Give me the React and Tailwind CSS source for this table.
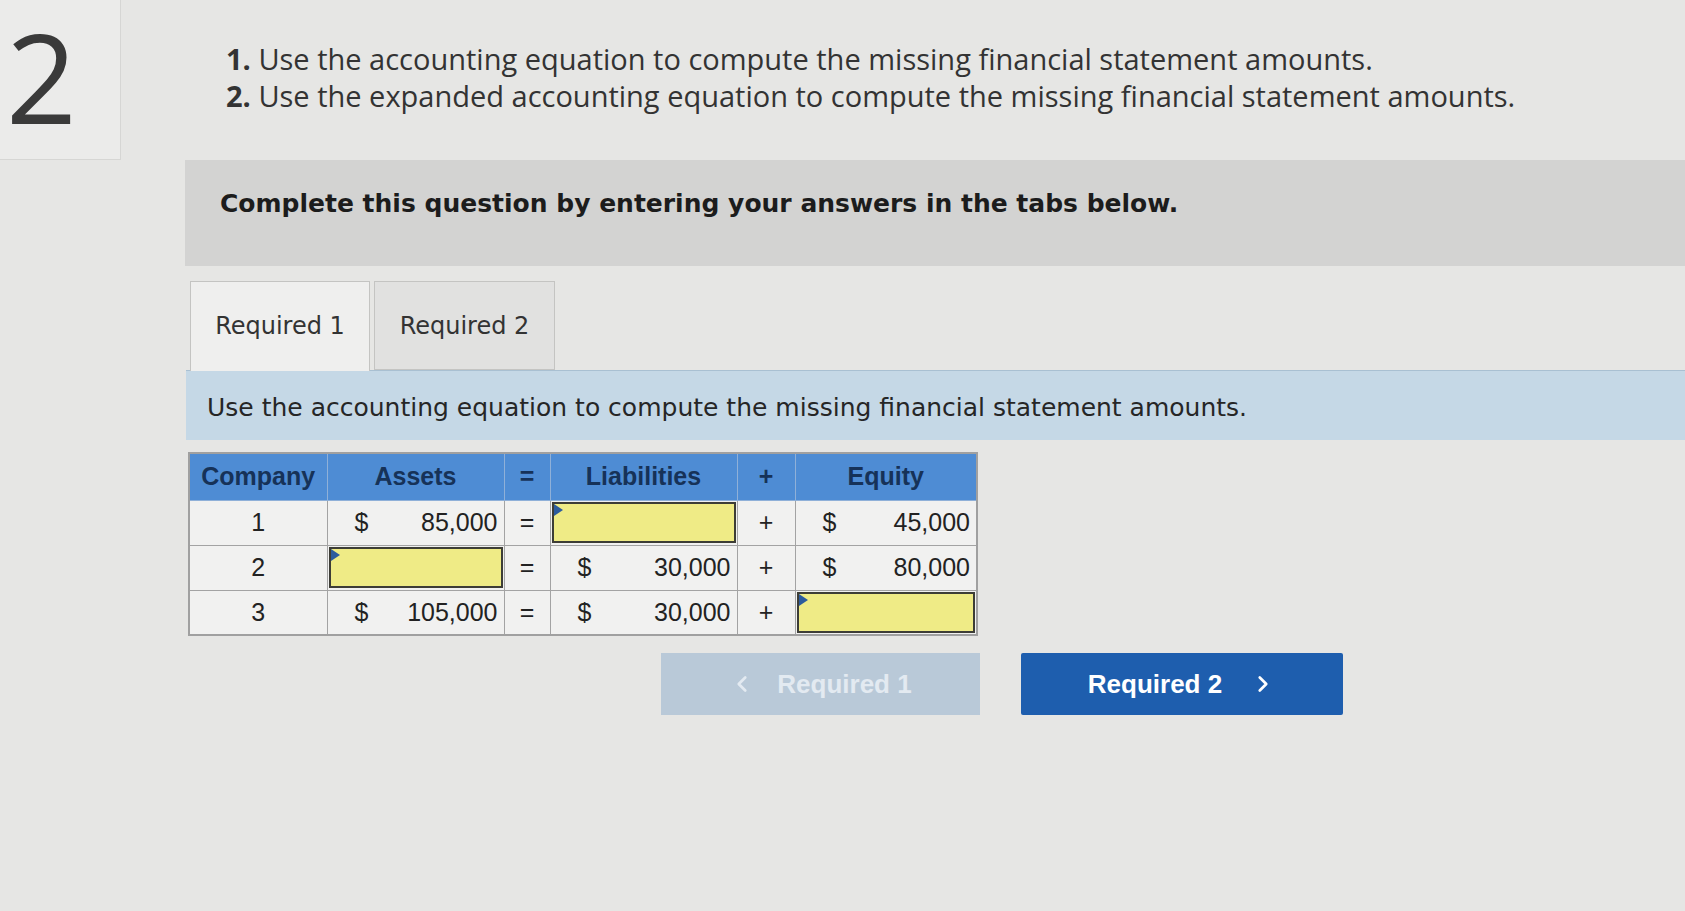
import { ChevronLeft, ChevronRight } from "lucide-react";

const sans = { fontFamily: "'Open Sans', Lato, sans-serif" };
const verdana = { fontFamily: "'DejaVu Sans', Verdana, sans-serif" };
const arial = { fontFamily: "'Liberation Sans', Arial, sans-serif" };

function YellowInput() {
  return (
    <div className="relative h-full w-full border-2 border-[#3d3d36] bg-[#efeb86]">
      <span className="absolute left-0 top-0 h-0 w-0 border-y-[6px] border-l-[9px] border-y-transparent border-l-[#2c5b9d]" />
    </div>
  );
}

function Money({ value }) {
  return (
    <div className="flex items-center justify-between pl-[27px] pr-[6px]">
      <span>$</span>
      <span>{value}</span>
    </div>
  );
}

const rows = [
  { id: "1", assets: "85,000", liab: null, equity: "45,000" },
  { id: "2", assets: null, liab: "30,000", equity: "80,000" },
  { id: "3", assets: "105,000", liab: "30,000", equity: null },
];

export default function App() {
  const head = "border border-[#8fb0d8] font-bold text-[#163258]";
  const cell = "border border-[#a3a3a3] bg-[#f1f1f0] p-0";

  return (
    <div className="flex h-[911px] w-full overflow-hidden bg-[#e6e6e4] text-[#2b2b2b]">
      <div className="w-[185px] shrink-0">
        <div className="h-[160px] w-[121px] border-b border-r border-[#d6d6d4] bg-[#ebebea] pl-[6px] pt-[6px]">
          <p
            className="text-[124px] font-normal leading-[140px] text-[#3a3a3a]"
            style={{ fontFamily: "'Open Sans', Roboto, sans-serif" }}
          >
            2
          </p>
        </div>
      </div>

      <div className="flex min-w-0 flex-1 flex-col">
        <ol className="pl-[41px] pt-[40px] text-[29px] leading-[37px] text-[#333]" style={sans}>
          <li>
            <span className="font-bold">1.</span> Use the accounting equation to compute the missing financial statement amounts.
          </li>
          <li>
            <span className="font-bold">2.</span> Use the expanded accounting equation to compute the missing financial statement amounts.
          </li>
        </ol>

        <div className="mt-[46px] flex h-[106px] items-start bg-[#d3d3d2] pl-[35px] pt-[28px]">
          <p className="text-[25px] font-bold leading-[32px] text-[#1c1c1c]" style={verdana}>
            Complete this question by entering your answers in the tabs below.
          </p>
        </div>

        <div className="ml-[5px] mt-[15px] flex" style={verdana}>
          <div className="relative z-10 flex h-[90px] w-[180px] items-center justify-center border border-b-0 border-[#c4c4c2] bg-[#efefee] pb-[1px] text-[24px] text-[#333]">
            Required 1
          </div>
          <div className="ml-[4px] flex h-[89px] w-[181px] items-center justify-center border border-[#c4c4c2] bg-[#e1e1e0] text-[24px] text-[#333]">
            Required 2
          </div>
        </div>

        <div className="-mt-[1px] ml-[1px] flex h-[70px] items-center border-t border-[#a9c0d2] bg-[#c5d8e6] pl-[21px] pt-[4px]">
          <p className="text-[25px] text-[#262626]" style={verdana}>
            Use the accounting equation to compute the missing financial statement amounts.
          </p>
        </div>

        <table
          className="ml-[3px] mt-[12px] w-[788px] table-fixed self-start border-collapse border-2 border-[#a0a0a0] text-[25px] text-[#222]"
          style={arial}
        >
          <colgroup>
            <col className="w-[138px]" />
            <col className="w-[177px]" />
            <col className="w-[46px]" />
            <col className="w-[187px]" />
            <col className="w-[58px]" />
            <col className="w-[182px]" />
          </colgroup>
          <thead>
            <tr className="h-[47px] bg-[#4e8cd4]">
              <th className={head}>Company</th>
              <th className={head}>Assets</th>
              <th className={head}>=</th>
              <th className={head}>Liabilities</th>
              <th className={head}>+</th>
              <th className={head}>Equity</th>
            </tr>
          </thead>
          <tbody>
            {rows.map((r) => (
              <tr key={r.id} className="h-[45px]">
                <td className={`${cell} text-center`}>{r.id}</td>
                <td className={`${cell} ${r.assets ? "" : "p-[1px]"}`}>
                  {r.assets ? <Money value={r.assets} /> : <div className="h-[41px]"><YellowInput /></div>}
                </td>
                <td className={`${cell} text-center`}>=</td>
                <td className={`${cell} ${r.liab ? "" : "p-[1px]"}`}>
                  {r.liab ? <Money value={r.liab} /> : <div className="h-[41px]"><YellowInput /></div>}
                </td>
                <td className={`${cell} text-center`}>+</td>
                <td className={`${cell} ${r.equity ? "" : "p-[1px]"}`}>
                  {r.equity ? <Money value={r.equity} /> : <div className="h-[41px]"><YellowInput /></div>}
                </td>
              </tr>
            ))}
          </tbody>
        </table>

        <div className="ml-[476px] mt-[17px] flex items-center gap-[41px]" style={arial}>
          <button className="flex h-[62px] w-[319px] items-center justify-center gap-[22px] bg-[#b9c9d8] text-[26px] font-bold text-[#e3eaf1]">
            <ChevronLeft className="h-[26px] w-[26px]" strokeWidth={2.5} />
            <span>Required 1</span>
          </button>
          <button className="flex h-[62px] w-[322px] items-center justify-center gap-[28px] rounded-[2px] bg-[#1e5eae] text-[26px] font-bold text-white">
            <span>Required 2</span>
            <ChevronRight className="h-[26px] w-[26px]" strokeWidth={2.5} />
          </button>
        </div>
      </div>
    </div>
  );
}
